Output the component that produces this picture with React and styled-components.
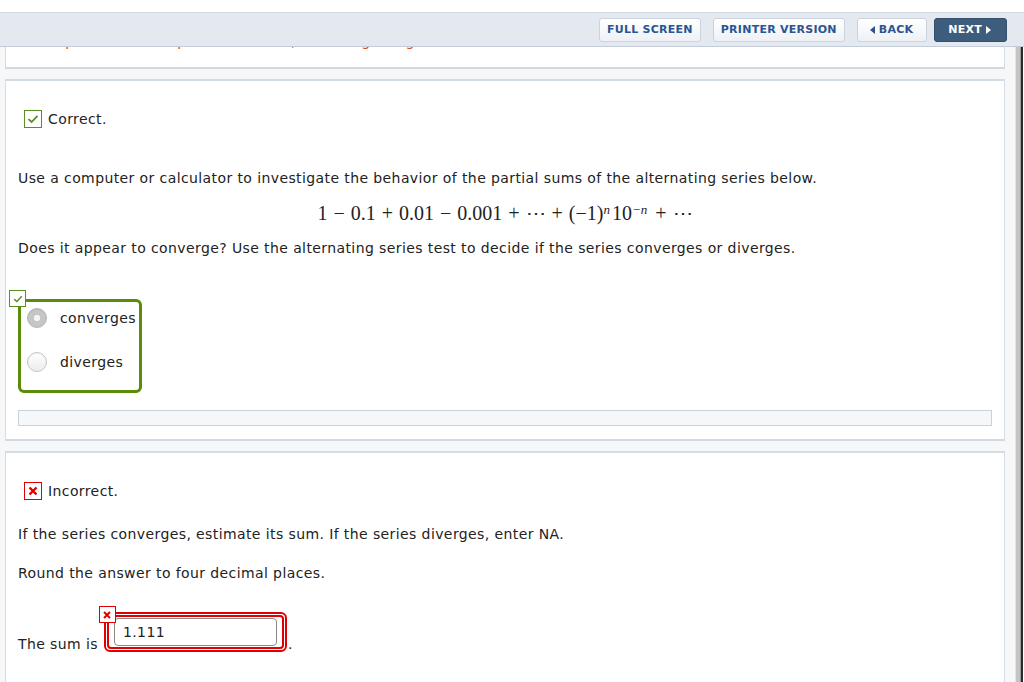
import styled, { createGlobalStyle } from "styled-components";

const GlobalStyle = createGlobalStyle`
  html, body {
    margin: 0;
    padding: 0;
    background: #ffffff;
  }
  body {
    font-family: "DejaVu Sans", Verdana, sans-serif;
    font-size: 14px;
    letter-spacing: 0.4px;
    color: #222222;
  }
`;

const CHECK = (
  <svg width="12" height="10" viewBox="0 0 12 10">
    <path d="M1.5 5.2 L4.6 8 L10.5 1.8" fill="none" stroke="#5a8f1f" strokeWidth="1.8" />
  </svg>
);

const CROSS = (
  <svg width="10" height="10" viewBox="0 0 10 10">
    <path d="M1.5 1.5 L8.5 8.5 M8.5 1.5 L1.5 8.5" fill="none" stroke="#e00000" strokeWidth="2.4" />
  </svg>
);

function App() {
  return (
    <Page>
      <GlobalStyle />
      <TopGap />
      <Toolbar>
        <ToolButton>FULL SCREEN</ToolButton>
        <ToolButton>PRINTER VERSION</ToolButton>
        <ToolButton $pad="0 13px 0 12px">
          <svg width="5" height="8" viewBox="0 0 5 8">
            <path d="M5 0 L0 4 L5 8 Z" fill="#2b5387" />
          </svg>
          <span>BACK</span>
        </ToolButton>
        <ToolButton $primary $pad="0 15px 0 13px">
          <span>NEXT</span>
          <svg width="5" height="8" viewBox="0 0 5 8">
            <path d="M0 0 L5 4 L0 8 Z" fill="#ffffff" />
          </svg>
        </ToolButton>
      </Toolbar>
      <Body>
        <Content>
          <Panel $cut>
            <CutText>Compute a partial sum, using g.</CutText>
          </Panel>

          <Panel>
            <Status $top="28px">
              <StatusIcon $ok>{CHECK}</StatusIcon>
              Correct.
            </Status>
            <Para $top="40px">
              Use a computer or calculator to investigate the behavior of the partial sums of the
              alternating series below.
            </Para>
            <Formula>
              1 − 0.1 + 0.01 − 0.001 + ⋯ + (−1)<sup>n</sup>10<sup>−n</sup> + ⋯
            </Formula>
            <Para $top="15px">
              Does it appear to converge? Use the alternating series test to decide if the series
              converges or diverges.
            </Para>
            <ChoiceWrap>
              <MiniBadge $ok>{CHECK}</MiniBadge>
              <ChoiceBox>
                <Choice>
                  <Radio $selected />
                  converges
                </Choice>
                <Choice>
                  <Radio />
                  diverges
                </Choice>
              </ChoiceBox>
            </ChoiceWrap>
            <GrayBar />
          </Panel>

          <Panel>
            <Status $top="28px">
              <StatusIcon>{CROSS}</StatusIcon>
              Incorrect.
            </Status>
            <Para $top="24px">
              If the series converges, estimate its sum. If the series diverges, enter NA.
            </Para>
            <Para $top="21px">Round the answer to four decimal places.</Para>
            <AnswerLine>
              The sum is
              <AnswerWrap>
                <MiniBadge>{CROSS}</MiniBadge>
                <AnswerFrame>
                  <AnswerRing>
                    <AnswerInput>1.111</AnswerInput>
                  </AnswerRing>
                </AnswerFrame>
              </AnswerWrap>
              .
            </AnswerLine>
          </Panel>
        </Content>
        <Scrollbar />
      </Body>
    </Page>
  );
}

export default App;

const Page = styled.div`
  width: 1024px;
  height: 682px;
  overflow: hidden;
  background: #ffffff;
  display: flex;
  flex-direction: column;
`;

const TopGap = styled.div`
  height: 12px;
  flex: none;
`;

const Toolbar = styled.div`
  flex: none;
  height: 33px;
  display: flex;
  align-items: center;
  justify-content: flex-end;
  gap: 12px;
  padding-right: 17px;
  background: #e4e8ef;
  border-top: 1px solid #d2d9e3;
  border-bottom: 1px solid #c3ccd8;
`;

const ToolButton = styled.div`
  display: flex;
  align-items: center;
  gap: 4px;
  height: 22px;
  padding: ${(p) => p.$pad || "0 7px"};
  border-radius: 3px;
  font-size: 11px;
  font-weight: bold;
  letter-spacing: 0.25px;
  color: ${(p) => (p.$primary ? "#ffffff" : "#2a5591")};
  background: ${(p) =>
    p.$primary ? "#3e5d7c" : "linear-gradient(#ffffff, #eef1f5)"};
  border: 1px solid ${(p) => (p.$primary ? "#34506c" : "#cbd3de")};
  margin-left: ${(p) => (p.$primary ? "-5px" : "0")};
`;

const Body = styled.div`
  flex: 1;
  display: flex;
  min-height: 0;
`;

const Content = styled.div`
  flex: 1;
  background: #f5f7f9;
  padding: 0 10px 0 5px;
  display: flex;
  flex-direction: column;
  gap: 10px;
  overflow: hidden;
`;

const Scrollbar = styled.div`
  width: 9px;
  flex: none;
  background: linear-gradient(
    to right,
    #e2e5e9 0 1px,
    #c4c4c4 1px 5px,
    #9a9a9a 5px 6px,
    #2a2a2a 6px 8px,
    #ffffff 8px 9px
  );
`;

const Panel = styled.div`
  flex: none;
  background: #ffffff;
  border: 1px solid #d5dce5;
  border-top: ${(p) => (p.$cut ? "none" : "2px solid #d3dbe3")};
  border-bottom: 2px solid #d0d8e2;
  padding: 0 12px;
  height: ${(p) => (p.$cut ? "20px" : "auto")};
  overflow: hidden;
  &:last-child {
    flex: 1;
    border-bottom: none;
  }
`;

const CutText = styled.div`
  margin-top: -14px;
  padding-left: 14px;
  color: #d4541e;
  font-size: 14px;
  word-spacing: 30px;
`;

const Status = styled.div`
  display: flex;
  align-items: center;
  gap: 6px;
  margin-top: ${(p) => p.$top};
  height: 20px;
  margin-left: 6px;
`;

const StatusIcon = styled.span`
  display: inline-flex;
  align-items: center;
  justify-content: center;
  width: 16px;
  height: 16px;
  border: 1px solid ${(p) => (p.$ok ? "#5a8f1f" : "#e00000")};
  background: #ffffff;
`;

const Para = styled.p`
  margin: ${(p) => p.$top} 0 0;
  line-height: 18px;
`;

const Formula = styled.div`
  margin-top: 15px;
  text-align: center;
  font-family: "Liberation Serif", "Times New Roman", serif;
  font-size: 20px;
  letter-spacing: 0;
  line-height: 22px;
  word-spacing: 1px;
  padding-left: 0;
  & sup {
    font-size: 13px;
    font-style: italic;
    vertical-align: 6px;
    line-height: 0;
    margin-right: 2px;
  }
`;

const ChoiceWrap = styled.div`
  position: relative;
  margin-top: 33px;
  padding-top: 9px;
`;

const MiniBadge = styled.span`
  position: absolute;
  top: 0;
  left: -9px;
  width: 15px;
  height: 15px;
  display: flex;
  align-items: center;
  justify-content: center;
  background: #ffffff;
  border: 1px solid ${(p) => (p.$ok ? "#5a8f1f" : "#e00000")};
  z-index: 1;
  & svg {
    transform: scale(0.85);
  }
`;

const ChoiceBox = styled.div`
  box-sizing: border-box;
  width: 124px;
  height: 94px;
  border: 3px solid #5a8c0a;
  border-radius: 6px;
  padding: 5px 0 0 6px;
  display: flex;
  flex-direction: column;
  gap: 22px;
`;

const Choice = styled.div`
  display: flex;
  align-items: center;
  gap: 13px;
  height: 22px;
`;

const Radio = styled.span`
  width: 20px;
  height: 20px;
  border-radius: 50%;
  box-sizing: border-box;
  border: 1px solid ${(p) => (p.$selected ? "#b4b4b4" : "#c4c4c4")};
  background: ${(p) =>
    p.$selected
      ? "radial-gradient(circle, #f4f4f4 0 3px, #c6c6c6 3.5px)"
      : "linear-gradient(#ffffff, #ececec)"};
  box-shadow: inset 0 1px 1px rgba(0, 0, 0, 0.06);
`;

const GrayBar = styled.div`
  margin: 17px 0 13px;
  height: 14px;
  background: #f5f7f9;
  border: 1px solid #c9d1dc;
`;

const AnswerLine = styled.div`
  display: flex;
  align-items: flex-end;
  margin-top: 24px;
`;

const AnswerWrap = styled.span`
  position: relative;
  margin: 0 1px 0 6px;
  padding-top: 6px;
  & > span {
    left: -5px;
    top: 0;
  }
`;

const AnswerFrame = styled.span`
  display: block;
  border: 2px solid #e00000;
  border-radius: 6px;
  padding: 1px;
`;

const AnswerRing = styled.span`
  display: block;
  border: 2px solid #e00000;
  border-radius: 4px;
  padding: 1px 5px;
`;

const AnswerInput = styled.div`
  width: 163px;
  height: 28px;
  box-sizing: border-box;
  border: 1px solid #8a8a8a;
  border-radius: 4px;
  padding: 0 8px;
  line-height: 26px;
  font-size: 14px;
  background: #ffffff;
`;
